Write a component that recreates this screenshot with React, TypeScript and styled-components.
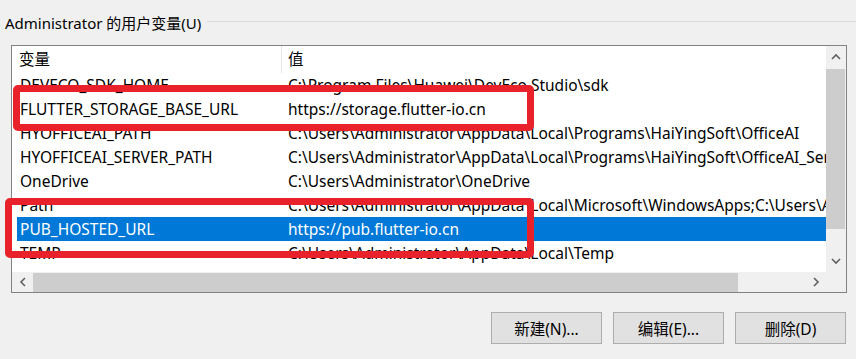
import React from "react";
import styled, { createGlobalStyle } from "styled-components";

const Global = createGlobalStyle`
  html, body { margin: 0; padding: 0; background: #f0f0f0; }
  body {
    width: 856px; height: 359px; overflow: hidden;
    font-family: "Noto Sans", "Noto Sans CJK SC", sans-serif;
    font-size: 15.5px; color: #000;
  }
`;

const Page = styled.div`
  position: relative;
  width: 856px;
  height: 359px;
  box-sizing: border-box;
  padding: 13px 10px 0 11px;
  display: flex;
  flex-direction: column;
`;

const GroupHeader = styled.div`
  display: flex;
  margin: 0 -10px 0 -6px;
  height: 20px;
`;

const GroupTitle = styled.div`
  line-height: 20px;
  font-size: 15px;
  white-space: nowrap;
`;

const GroupRule = styled.div`
  flex: 1;
  height: 1px;
  margin: 8px 0 0 6px;
  background: #dcdcdc;
`;

const ListFrame = styled.div`
  margin-top: 12px;
  width: 836px;
  height: 248px;
  box-sizing: border-box;
  border: 1px solid #828282;
  background: #fff;
  display: grid;
  grid-template-columns: 1fr 20px;
  grid-template-rows: 1fr 20px;
  overflow: hidden;
`;

const Content = styled.div`
  overflow: hidden;
  display: flex;
  flex-direction: column;
`;

const HeaderRow = styled.div`
  display: grid;
  grid-template-columns: 265px 1fr;
  margin-left: 5px;
  height: 27px;
  flex: none;
`;

const HeaderCell = styled.div<{ $divider?: boolean }>`
  line-height: 27px;
  padding-left: ${(p) => (p.$divider ? "2px" : "6px")};
  border-right: ${(p) => (p.$divider ? "1px solid #e5e5e5" : "none")};
  white-space: nowrap;
  overflow: hidden;
`;

const Row = styled.div<{ $selected?: boolean }>`
  display: grid;
  grid-template-columns: 265px 1fr;
  margin-left: 5px;
  height: 24px;
  flex: none;
  background: ${(p) => (p.$selected ? "#0078d7" : "transparent")};
  color: ${(p) => (p.$selected ? "#fff" : "#000")};
`;

const NameCell = styled.div`
  line-height: 24px;
  padding-left: 3px;
  white-space: nowrap;
  overflow: hidden;
`;

const ValueCell = styled.div`
  line-height: 24px;
  padding-left: 6px;
  white-space: nowrap;
  overflow: hidden;
`;

const VScroll = styled.div`
  background: #f0f0f0;
  display: flex;
  flex-direction: column;
`;

const HScroll = styled.div`
  background: #f0f0f0;
  display: flex;
  flex-direction: row;
`;

const Corner = styled.div`
  background: #f0f0f0;
`;

const ArrowBox = styled.div<{ $size: number; $vertical?: boolean }>`
  flex: none;
  ${(p) => (p.$vertical ? `height: ${p.$size}px;` : `width: ${p.$size}px;`)}
  display: flex;
  align-items: center;
  justify-content: center;
`;

const Track = styled.div`
  flex: 1;
  display: flex;
`;

const VThumb = styled.div`
  margin: 1px 1px 0 0;
  height: 160px;
  flex: 1;
  align-self: flex-start;
  background: #cdcdcd;
`;

const HThumb = styled.div`
  margin-top: 1px;
  width: 705px;
  height: 19px;
  background: #cdcdcd;
`;

const ButtonRow = styled.div`
  margin-top: 19px;
  display: flex;
  justify-content: flex-end;
  gap: 11px;
`;

const Button = styled.button`
  width: 111px;
  height: 32px;
  box-sizing: border-box;
  border: 1px solid #adadad;
  background: #e1e1e1;
  font-family: inherit;
  font-size: 15.5px;
  color: #000;
  padding: 0;
`;

const Highlight = styled.div<{ $left: number; $top: number; $w: number; $h: number }>`
  position: absolute;
  left: ${(p) => p.$left}px;
  top: ${(p) => p.$top}px;
  width: ${(p) => p.$w}px;
  height: ${(p) => p.$h}px;
  box-sizing: border-box;
  border: 7px solid #e8212b;
  border-radius: 5px;
  pointer-events: none;
`;

type Dir = "up" | "down" | "left" | "right";
const chevronPaths: Record<Dir, string> = {
  up: "M1 6 L5 2 L9 6",
  down: "M1 2 L5 6 L9 2",
  left: "M6 1 L2 5 L6 9",
  right: "M2 1 L6 5 L2 9",
};

const Chevron = ({ dir }: { dir: Dir }) => {
  const horiz = dir === "left" || dir === "right";
  return (
    <svg width={horiz ? 8 : 10} height={horiz ? 10 : 8} viewBox={horiz ? "0 0 8 10" : "0 0 10 8"}>
      <path d={chevronPaths[dir]} fill="none" stroke="#606060" strokeWidth="1.6" />
    </svg>
  );
};

const rows: [string, string][] = [
  ["DEVECO_SDK_HOME", "C:\\Program Files\\Huawei\\DevEco Studio\\sdk"],
  ["FLUTTER_STORAGE_BASE_URL", "https://storage.flutter-io.cn"],
  ["HYOFFICEAI_PATH", "C:\\Users\\Administrator\\AppData\\Local\\Programs\\HaiYingSoft\\OfficeAI"],
  ["HYOFFICEAI_SERVER_PATH", "C:\\Users\\Administrator\\AppData\\Local\\Programs\\HaiYingSoft\\OfficeAI_Server"],
  ["OneDrive", "C:\\Users\\Administrator\\OneDrive"],
  ["Path", "C:\\Users\\Administrator\\AppData\\Local\\Microsoft\\WindowsApps;C:\\Users\\Administrator"],
  ["PUB_HOSTED_URL", "https://pub.flutter-io.cn"],
  ["TEMP", "C:\\Users\\Administrator\\AppData\\Local\\Temp"],
];

export default function App() {
  return (
    <>
      <Global />
      <Page>
        <GroupHeader>
          <GroupTitle>Administrator 的用户变量(U)</GroupTitle>
          <GroupRule />
        </GroupHeader>
        <ListFrame>
          <Content>
            <HeaderRow>
              <HeaderCell $divider>变量</HeaderCell>
              <HeaderCell>值</HeaderCell>
            </HeaderRow>
            {rows.map(([name, value]) => (
              <Row key={name} $selected={name === "PUB_HOSTED_URL"}>
                <NameCell>{name}</NameCell>
                <ValueCell>{value}</ValueCell>
              </Row>
            ))}
          </Content>
          <VScroll>
            <ArrowBox $size={22} $vertical>
              <Chevron dir="up" />
            </ArrowBox>
            <Track>
              <VThumb />
            </Track>
            <ArrowBox $size={22} $vertical>
              <Chevron dir="down" />
            </ArrowBox>
          </VScroll>
          <HScroll>
            <ArrowBox $size={21}>
              <Chevron dir="left" />
            </ArrowBox>
            <Track>
              <HThumb />
            </Track>
            <ArrowBox $size={20}>
              <Chevron dir="right" />
            </ArrowBox>
          </HScroll>
          <Corner />
        </ListFrame>
        <ButtonRow>
          <Button>新建(N)...</Button>
          <Button>编辑(E)...</Button>
          <Button>删除(D)</Button>
        </ButtonRow>
        <Highlight $left={13} $top={85} $w={521} $h={46} />
        <Highlight $left={5} $top={198} $w={529} $h={60} />
      </Page>
    </>
  );
}
